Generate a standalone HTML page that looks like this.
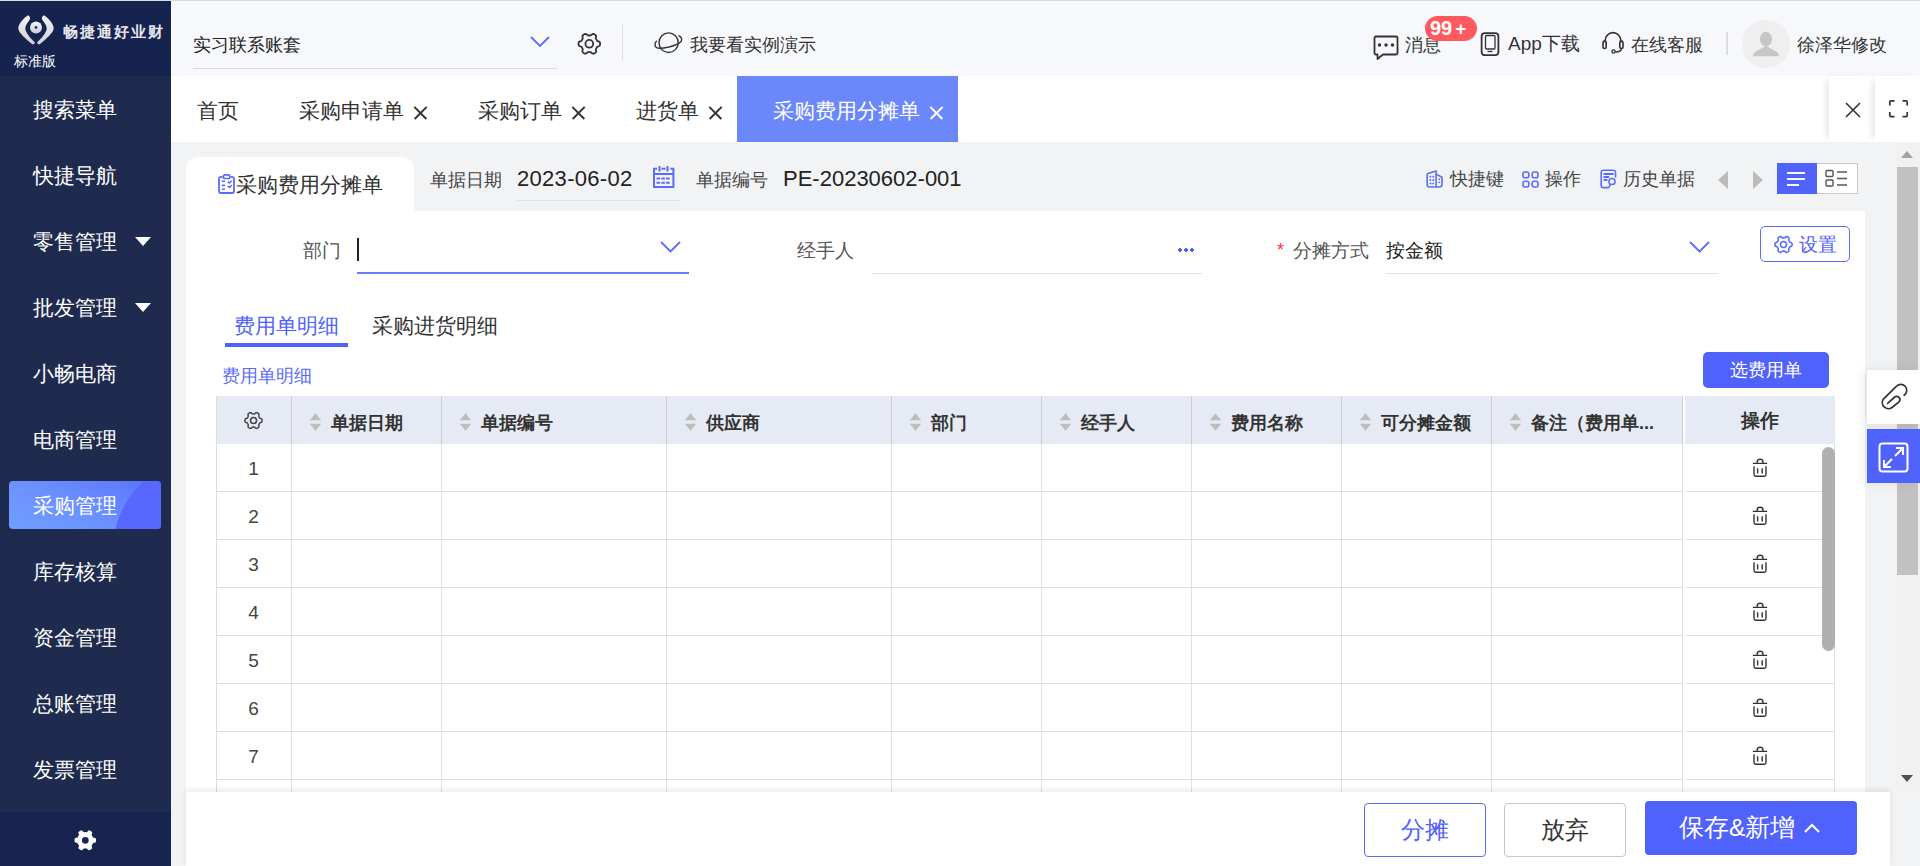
<!DOCTYPE html>
<html><head><meta charset="utf-8">
<style>
*{box-sizing:border-box;margin:0;padding:0}
html,body{width:1920px;height:866px;overflow:hidden;background:#f2f3f5;font-family:"Liberation Sans",sans-serif;color:#333}
.a{position:absolute}
.mi{position:absolute;left:33px;color:#fff;font-size:21px;line-height:24px;white-space:nowrap}
.tri{position:absolute;left:135px;width:0;height:0;border-left:8px solid transparent;border-right:8px solid transparent;border-top:9px solid #fff}
.t{position:absolute;font-size:18px;line-height:22px;white-space:nowrap;color:#333}
.tab{position:absolute;top:99px;font-size:21px;line-height:24px;white-space:nowrap;color:#333}
.x{display:inline-block;position:relative;width:14px;height:14px;margin-left:9px;vertical-align:0px}
.x:before,.x:after{content:"";position:absolute;left:-1.5px;top:8px;width:17px;height:1.5px;background:currentColor;transform:rotate(45deg)}
.x:after{transform:rotate(-45deg)}
</style></head><body>

<div class="a" style="left:0;top:0;width:1920px;height:1px;background:#dcdcdc"></div>
<div class="a" style="left:0;top:1px;width:171px;height:865px;background:#1f2b4e"></div>
<div class="a" style="left:0;top:1px;width:171px;height:75px;background:#16234f"></div>
<div class="a" style="left:0;top:812px;width:171px;height:54px;background:#17244f"></div>
<div class="a" style="left:9px;top:481px;width:152px;height:48px;border-radius:4px;background:linear-gradient(205deg,#5873ff 0%,#6c90ff 55%,#6f9fff 100%);overflow:hidden"><div class="a" style="left:104px;top:-23px;width:184px;height:184px;border-radius:50%;background:#5868ff"></div></div>
<div class="a" style="left:171px;top:1px;width:1749px;height:75px;background:#f7f8fc;border-left:1px solid #fff"></div>
<div class="a" style="left:171px;top:76px;width:1749px;height:66px;background:#fff;border-left:1px solid #fff"></div>
<svg class="a" style="left:17px;top:14px" width="40" height="32" viewBox="0 0 40 32">
<defs><linearGradient id="lg" x1="0" y1="0" x2="0" y2="1"><stop offset="0" stop-color="#f4f4f6"/><stop offset="1" stop-color="#cfd0d6"/></linearGradient></defs>
<path d="M10.5 1.5C8 3.5 1.3 9 1.3 14.5C1.3 18.5 9 25 15.3 30.3C16.8 30.6 18 29.6 17.8 28.2C13 23.5 8.3 18.5 8.3 14.2C8.3 11 11 8.5 12.8 5.5C13.8 3.5 12 0.8 10.5 1.5Z" fill="url(#lg)"/>
<path d="M27.5 1.5C30 3.5 36.7 9 36.7 14.5C36.7 18.5 29 25 22.7 30.3C21.2 30.6 20 29.6 20.2 28.2C25 23.5 29.7 18.5 29.7 14.2C29.7 11 27 8.5 25.2 5.5C24.2 3.5 26 0.8 27.5 1.5Z" fill="url(#lg)"/>
<circle cx="19" cy="13.5" r="6" fill="url(#lg)"/><circle cx="19" cy="13.5" r="1.4" fill="#2a3560"/>
</svg>
<div class="a" style="left:63px;top:23px;color:#e8e8ee;font-size:15px;line-height:18px;font-weight:bold;letter-spacing:2px;white-space:nowrap">畅捷通好业财</div>
<div class="a" style="left:14px;top:53px;color:#fff;font-size:14px;line-height:16px;white-space:nowrap">标准版</div>
<div class="mi" style="top:98px">搜索菜单</div>
<div class="mi" style="top:164px">快捷导航</div>
<div class="mi" style="top:230px">零售管理</div>
<div class="tri" style="top:237px"></div>
<div class="mi" style="top:296px">批发管理</div>
<div class="tri" style="top:303px"></div>
<div class="mi" style="top:362px">小畅电商</div>
<div class="mi" style="top:428px">电商管理</div>
<div class="mi" style="top:494px">采购管理</div>
<div class="mi" style="top:560px">库存核算</div>
<div class="mi" style="top:626px">资金管理</div>
<div class="mi" style="top:692px">总账管理</div>
<div class="mi" style="top:758px">发票管理</div>
<svg class="a" style="left:73px;top:828px" width="24" height="24" viewBox="0 0 24 24"><path fill="#fff" fill-rule="evenodd" d="M23.00 12.30 L22.99 12.77 L22.96 13.23 L22.89 13.69 L22.77 14.15 L22.41 14.54 L21.43 14.75 L20.45 14.87 L20.07 15.13 L19.89 15.44 L19.73 15.77 L19.57 16.09 L19.40 16.40 L19.22 16.71 L19.02 17.01 L18.82 17.30 L18.64 17.62 L18.60 18.08 L18.98 18.98 L19.29 19.93 L19.13 20.44 L18.80 20.78 L18.44 21.06 L18.05 21.32 L17.65 21.57 L17.24 21.79 L16.82 21.99 L16.39 22.17 L15.94 22.29 L15.41 22.17 L14.75 21.43 L14.15 20.65 L13.74 20.45 L13.37 20.45 L13.01 20.47 L12.66 20.49 L12.30 20.50 L11.94 20.49 L11.59 20.47 L11.23 20.45 L10.86 20.45 L10.45 20.65 L9.85 21.43 L9.19 22.17 L8.66 22.29 L8.21 22.17 L7.78 21.99 L7.36 21.79 L6.95 21.57 L6.55 21.32 L6.16 21.06 L5.80 20.78 L5.47 20.44 L5.31 19.93 L5.62 18.98 L6.00 18.08 L5.96 17.62 L5.78 17.30 L5.58 17.01 L5.38 16.71 L5.20 16.40 L5.03 16.09 L4.87 15.77 L4.71 15.44 L4.53 15.13 L4.15 14.87 L3.17 14.75 L2.19 14.54 L1.83 14.15 L1.71 13.69 L1.64 13.23 L1.61 12.77 L1.60 12.30 L1.61 11.83 L1.64 11.37 L1.71 10.91 L1.83 10.45 L2.19 10.06 L3.17 9.85 L4.15 9.73 L4.53 9.47 L4.71 9.16 L4.87 8.83 L5.03 8.51 L5.20 8.20 L5.38 7.89 L5.58 7.59 L5.78 7.30 L5.96 6.98 L6.00 6.52 L5.62 5.62 L5.31 4.67 L5.47 4.16 L5.80 3.82 L6.16 3.54 L6.55 3.28 L6.95 3.03 L7.36 2.81 L7.78 2.61 L8.21 2.43 L8.66 2.31 L9.19 2.43 L9.85 3.17 L10.45 3.95 L10.86 4.15 L11.23 4.15 L11.59 4.13 L11.94 4.11 L12.30 4.10 L12.66 4.11 L13.01 4.13 L13.37 4.15 L13.74 4.15 L14.15 3.95 L14.75 3.17 L15.41 2.43 L15.94 2.31 L16.39 2.43 L16.82 2.61 L17.24 2.81 L17.65 3.03 L18.05 3.28 L18.44 3.54 L18.80 3.82 L19.13 4.16 L19.29 4.67 L18.98 5.62 L18.60 6.52 L18.64 6.98 L18.82 7.30 L19.02 7.59 L19.22 7.89 L19.40 8.20 L19.57 8.51 L19.73 8.83 L19.89 9.16 L20.07 9.47 L20.45 9.73 L21.43 9.85 L22.41 10.06 L22.77 10.45 L22.89 10.91 L22.96 11.37 L22.99 11.83Z M15.7 12.3a3.4 3.4 0 1 0 -6.8 0a3.4 3.4 0 1 0 6.8 0Z"/></svg>
<div class="t" style="left:193px;top:34px;color:#222">实习联系账套</div>
<div class="a" style="left:193px;top:68px;width:364px;height:1px;background:#dcdcdc"></div>
<svg class="a" style="left:530px;top:36px" width="20" height="12" viewBox="0 0 20 12"><path d="M1 1l9 9 9-9" fill="none" stroke="#5b6cf9" stroke-width="1.8"/></svg>
<svg class="a" style="left:577px;top:32px" width="25" height="24" viewBox="0 0 25 24"><path fill="none" stroke="#333" stroke-width="1.8" stroke-linejoin="round" d="M23.10 11.80 L23.08 12.27 L23.03 12.74 L22.91 13.20 L22.68 13.63 L22.23 14.00 L21.52 14.27 L20.82 14.49 L20.35 14.73 L20.06 15.01 L19.85 15.32 L19.67 15.64 L19.49 15.95 L19.31 16.26 L19.13 16.58 L18.96 16.91 L18.86 17.30 L18.89 17.84 L19.05 18.55 L19.17 19.30 L19.07 19.87 L18.81 20.29 L18.48 20.62 L18.10 20.90 L17.70 21.15 L17.28 21.37 L16.85 21.56 L16.40 21.69 L15.90 21.70 L15.36 21.50 L14.77 21.02 L14.23 20.52 L13.79 20.23 L13.40 20.13 L13.03 20.10 L12.66 20.10 L12.30 20.10 L11.94 20.10 L11.57 20.10 L11.20 20.13 L10.81 20.23 L10.37 20.52 L9.83 21.02 L9.24 21.50 L8.70 21.70 L8.20 21.69 L7.75 21.56 L7.32 21.37 L6.90 21.15 L6.50 20.90 L6.12 20.62 L5.79 20.29 L5.53 19.87 L5.43 19.30 L5.55 18.55 L5.71 17.84 L5.74 17.30 L5.64 16.91 L5.47 16.58 L5.29 16.26 L5.11 15.95 L4.93 15.64 L4.75 15.32 L4.54 15.01 L4.25 14.73 L3.78 14.49 L3.08 14.27 L2.37 14.00 L1.92 13.63 L1.69 13.20 L1.57 12.74 L1.52 12.27 L1.50 11.80 L1.52 11.33 L1.57 10.86 L1.69 10.40 L1.92 9.97 L2.37 9.60 L3.08 9.33 L3.78 9.11 L4.25 8.87 L4.54 8.59 L4.75 8.28 L4.93 7.96 L5.11 7.65 L5.29 7.34 L5.47 7.02 L5.64 6.69 L5.74 6.30 L5.71 5.76 L5.55 5.05 L5.43 4.30 L5.53 3.73 L5.79 3.31 L6.12 2.98 L6.50 2.70 L6.90 2.45 L7.32 2.23 L7.75 2.04 L8.20 1.91 L8.70 1.90 L9.24 2.10 L9.83 2.58 L10.37 3.08 L10.81 3.37 L11.20 3.47 L11.57 3.50 L11.94 3.50 L12.30 3.50 L12.66 3.50 L13.03 3.50 L13.40 3.47 L13.79 3.37 L14.23 3.08 L14.77 2.58 L15.36 2.10 L15.90 1.90 L16.40 1.91 L16.85 2.04 L17.28 2.23 L17.70 2.45 L18.10 2.70 L18.48 2.98 L18.81 3.31 L19.07 3.73 L19.17 4.30 L19.05 5.05 L18.89 5.76 L18.86 6.30 L18.96 6.69 L19.13 7.02 L19.31 7.34 L19.49 7.65 L19.67 7.96 L19.85 8.28 L20.06 8.59 L20.35 8.87 L20.82 9.11 L21.52 9.33 L22.23 9.60 L22.68 9.97 L22.91 10.40 L23.03 10.86 L23.08 11.33Z"/><circle cx="12.3" cy="11.8" r="3.9" fill="none" stroke="#333" stroke-width="1.8"/></svg>
<div class="a" style="left:622px;top:24px;width:1px;height:36px;background:#ddd"></div>
<svg class="a" style="left:645px;top:25px" width="50" height="40" viewBox="0 0 50 40"><ellipse cx="23.6" cy="17.7" rx="9.6" ry="9.8" fill="none" stroke="#333" stroke-width="1.4"/><path d="M11.8 15.8C9.5 18 9.5 21 11.5 22.5C13 23.8 17 23.5 24 22C30 20.5 34 19 36 16.5C37.5 14.5 36.5 11.5 33.5 10.8" fill="none" stroke="#333" stroke-width="1.4"/></svg>
<div class="t" style="left:690px;top:34px;color:#333">我要看实例演示</div>
<svg class="a" style="left:1373px;top:35px" width="26" height="26" viewBox="0 0 26 26"><path d="M4.5 19.5H3a1.5 1.5 0 0 1-1.5-1.5V3A1.5 1.5 0 0 1 3 1.5h20A1.5 1.5 0 0 1 24.5 3v15a1.5 1.5 0 0 1-1.5 1.5H10L4.5 24z" fill="none" stroke="#333" stroke-width="1.8" stroke-linejoin="round"/><circle cx="6.5" cy="10" r="1.7" fill="#333"/><circle cx="13" cy="10" r="1.7" fill="#333"/><circle cx="19.5" cy="10" r="1.7" fill="#333"/></svg>
<div class="t" style="left:1405px;top:34px">消息</div>
<div class="a" style="left:1425px;top:16px;width:52px;height:25px;border-radius:13px;background:#ff5a5f;color:#fff;font-size:20px;line-height:25px;font-weight:bold;white-space:nowrap;padding-left:5px">99<span style="font-size:19px;margin-left:3px">+</span></div>
<svg class="a" style="left:1480px;top:32px" width="20" height="25" viewBox="0 0 20 25"><rect x="1.6" y="1.2" width="16.8" height="22" rx="3.2" fill="none" stroke="#333" stroke-width="1.8"/><rect x="5.5" y="3.5" width="9.5" height="13.5" rx="1" fill="none" stroke="#333" stroke-width="1.3"/><path d="M7.5 19.5h5" stroke="#333" stroke-width="1.3"/></svg>
<div class="t" style="left:1508px;top:33px;font-size:19px">App下载</div>
<svg class="a" style="left:1602px;top:31px" width="22" height="23" viewBox="0 0 22 23"><path d="M3.2 11.5V9.5a7.8 7.8 0 0 1 15.6 0v2" fill="none" stroke="#333" stroke-width="1.7"/><rect x="1" y="10" width="3.2" height="7.5" rx="1.6" fill="none" stroke="#333" stroke-width="1.6"/><rect x="17.8" y="10" width="3.2" height="7.5" rx="1.6" fill="none" stroke="#333" stroke-width="1.6"/><path d="M19.4 17.5c0 2.5-2.5 3.5-6 3.5" fill="none" stroke="#333" stroke-width="1.5"/><circle cx="11.5" cy="20.5" r="1.6" fill="none" stroke="#333" stroke-width="1.4"/></svg>
<div class="t" style="left:1631px;top:34px">在线客服</div>
<div class="a" style="left:1726px;top:32px;width:2px;height:23px;background:#ddd"></div>
<div class="a" style="left:1742px;top:20px;width:48px;height:48px;border-radius:50%;background:#efefef;overflow:hidden"><svg width="48" height="48" viewBox="0 0 48 48"><ellipse cx="24" cy="19" rx="6" ry="7.3" fill="#c6c6c6"/><path d="M11.3 36.2C11.3 33 12.5 32 17.5 29.5L24 25.8L30.5 29.5C35.5 32 36.7 33 36.7 36.2Z" fill="#c6c6c6"/></svg></div>
<div class="t" style="left:1797px;top:34px">徐泽华修改</div>
<div class="tab" style="left:197px">首页</div>
<div class="tab" style="left:299px">采购申请单<i class="x"></i></div>
<div class="tab" style="left:478px">采购订单<i class="x"></i></div>
<div class="tab" style="left:636px">进货单<i class="x"></i></div>
<div class="a" style="left:737px;top:76px;width:221px;height:66px;background:#6b88fb"></div>
<div class="tab" style="left:773px;color:#fff">采购费用分摊单<i class="x"></i></div>
<div class="a" style="left:1829px;top:76px;width:46px;height:66px;background:#fff;box-shadow:-6px 0 8px -4px rgba(0,0,0,.12)"></div>
<div class="a" style="left:1875px;top:76px;width:45px;height:66px;background:#fff;box-shadow:-6px 0 8px -4px rgba(0,0,0,.12)"></div>
<svg class="a" style="left:1845px;top:102px" width="16" height="16" viewBox="0 0 16 16"><path d="M1 1l14 14M15 1L1 15" stroke="#333" stroke-width="1.6"/></svg>
<svg class="a" style="left:1888px;top:99px" width="21" height="20" viewBox="0 0 21 20"><path d="M1.8 6.5V3a1.2 1.2 0 0 1 1.2-1.2h3.5M14.5 1.8H18a1.2 1.2 0 0 1 1.2 1.2v3.5M19.2 13v3.5a1.2 1.2 0 0 1-1.2 1.2h-3.5M6.5 17.7H3a1.2 1.2 0 0 1-1.2-1.2V13" fill="none" stroke="#333" stroke-width="1.7"/></svg>
<div class="a" style="left:186px;top:157px;width:228px;height:60px;background:#fff;border-radius:12px 12px 0 0"></div>
<div class="a" style="left:186px;top:211px;width:1679px;height:655px;background:#fff"></div>
<svg class="a" style="left:218px;top:174px" width="17" height="20" viewBox="0 0 17 20"><path d="M4.5 2.8H3a2 2 0 0 0-2 2V17a2 2 0 0 0 2 2h11a2 2 0 0 0 2-2V4.8a2 2 0 0 0-2-2h-1.5" fill="none" stroke="#5b6cf9" stroke-width="1.8"/><rect x="5.3" y="0.9" width="6.6" height="3.6" rx="1.8" fill="none" stroke="#5b6cf9" stroke-width="1.6"/><path d="M3.8 7.3h3.2M3.8 11.4h3.2M3.8 15.3h3.2M9.6 7.6l1.7 1.4 2.4-2.2M9.6 12l1.7 1.4 2.4-2.2" fill="none" stroke="#5b6cf9" stroke-width="1.6"/></svg>
<div class="t" style="left:236px;top:173px;font-size:21px;line-height:24px;color:#333">采购费用分摊单</div>
<div class="t" style="left:430px;top:169px;color:#444">单据日期</div>
<div class="t" style="left:517px;top:166px;font-size:22px;line-height:26px;letter-spacing:0.3px;color:#222">2023-06-02</div>
<div class="a" style="left:517px;top:200px;width:163px;height:1px;background:#e0e0e0"></div>
<svg class="a" style="left:653px;top:166px" width="22" height="22" viewBox="0 0 22 22"><path d="M4 2.8H1v18.2h19.4V2.8h-3M8.5 2.8h4M1 8h19.4" fill="none" stroke="#5b6cf9" stroke-width="2"/><path d="M6.5 0v5.5M14.5 0v5.5" stroke="#5b6cf9" stroke-width="2"/><path d="M3.5 12.5h14M3.5 16.8h14" stroke="#5b6cf9" stroke-width="1.9" stroke-dasharray="3.6 1.2"/></svg>
<div class="t" style="left:696px;top:169px;color:#444">单据编号</div>
<div class="t" style="left:783px;top:166px;font-size:22px;line-height:26px;letter-spacing:0px;color:#222">PE-20230602-001</div>
<svg class="a" style="left:1420px;top:165px" width="30" height="30" viewBox="0 0 30 30"><path d="M7.2 8.8V19.5A2.5 2.5 0 0 0 9.7 22H19.5A2.5 2.5 0 0 0 22 19.5V12.2L16.6 9.4M7.2 8.8L16.1 5.9V22" fill="none" stroke="#5b6cf9" stroke-width="1.6" stroke-linejoin="round"/><g fill="#5b6cf9"><circle cx="10.3" cy="11.8" r="1"/><circle cx="13.3" cy="11.8" r="1"/><circle cx="10.3" cy="15" r="1"/><circle cx="13.3" cy="15" r="1"/><circle cx="19.3" cy="14.2" r="0.9"/><circle cx="19.3" cy="17.3" r="0.9"/></g><path d="M9.5 18.5h4.5" stroke="#5b6cf9" stroke-width="1.3" stroke-dasharray="2 0.8"/></svg>
<div class="t" style="left:1450px;top:168px;color:#444">快捷键</div>
<svg class="a" style="left:1522px;top:171px" width="17" height="17" viewBox="0 0 17 17"><rect x="1" y="1" width="5.8" height="5.8" rx="2" fill="none" stroke="#5b6cf9" stroke-width="1.6"/><rect x="10.2" y="1" width="5.8" height="5.8" rx="2" fill="none" stroke="#5b6cf9" stroke-width="1.6"/><rect x="1" y="10.2" width="5.8" height="5.8" rx="2" fill="none" stroke="#5b6cf9" stroke-width="1.6"/><rect x="10.2" y="10.2" width="5.8" height="5.8" rx="2" fill="none" stroke="#5b6cf9" stroke-width="1.6"/></svg>
<div class="t" style="left:1545px;top:168px;color:#444">操作</div>
<svg class="a" style="left:1595px;top:165px" width="30" height="30" viewBox="0 0 30 30"><path d="M20.5 12.5V7A2 2 0 0 0 18.5 5.2H8A2 2 0 0 0 6.2 7V20.8A2 2 0 0 0 8 22.6H14.3" fill="none" stroke="#5b6cf9" stroke-width="1.6"/><path d="M9.2 9h8.8M9.2 12h4.3M9.2 15h2.5" stroke="#5b6cf9" stroke-width="1.8" stroke-linecap="round"/><circle cx="17" cy="16.5" r="3.1" fill="none" stroke="#5b6cf9" stroke-width="1.5"/><path d="M15.4 19.3L14.1 22.3" stroke="#5b6cf9" stroke-width="1.6"/></svg>
<div class="t" style="left:1623px;top:168px;color:#444">历史单据</div>
<div class="a" style="left:1718px;top:171px;width:0;height:0;border-top:9px solid transparent;border-bottom:9px solid transparent;border-right:10px solid #bbb"></div>
<div class="a" style="left:1753px;top:171px;width:0;height:0;border-top:9px solid transparent;border-bottom:9px solid transparent;border-left:10px solid #bbb"></div>
<div class="a" style="left:1777px;top:163px;width:81px;height:31px;border:1px solid #c8c8c8;background:#fff"></div>
<div class="a" style="left:1777px;top:163px;width:40px;height:31px;background:#5062fc"></div>
<svg class="a" style="left:1786px;top:171px" width="22" height="16" viewBox="0 0 22 16"><path d="M1 2h18M1 8h18M1 14h12" stroke="#fff" stroke-width="1.8"/></svg>
<svg class="a" style="left:1825px;top:169px" width="24" height="19" viewBox="0 0 24 19"><rect x="1" y="1.5" width="7" height="6" rx="1" fill="none" stroke="#555" stroke-width="1.4"/><rect x="1" y="11" width="7" height="6" rx="1" fill="none" stroke="#555" stroke-width="1.4"/><path d="M12 3h10M12 9.5h10M12 16h10" stroke="#555" stroke-width="1.4"/></svg>
<div class="t" style="left:303px;top:240px;font-size:19px;color:#555">部门</div>
<div class="a" style="left:357px;top:238px;width:2px;height:23px;background:#222"></div>
<svg class="a" style="left:660px;top:241px" width="21" height="12" viewBox="0 0 21 12"><path d="M1 1l9.5 9.5L20 1" fill="none" stroke="#5b6cf9" stroke-width="1.8"/></svg>
<div class="a" style="left:357px;top:272px;width:332px;height:2px;background:#6b7cf9"></div>
<div class="t" style="left:797px;top:240px;font-size:19px;color:#555">经手人</div>
<div class="a" style="left:1177px;top:248px;width:17px;height:4px;background:radial-gradient(circle,#5062fc 1.6px,transparent 2px) 0 0/6px 4px"></div>
<div class="a" style="left:872px;top:273px;width:330px;height:1px;background:#e0e0e0"></div>
<div class="t" style="left:1277px;top:239px;color:#f33">*</div>
<div class="t" style="left:1293px;top:240px;font-size:19px;color:#555">分摊方式</div>
<div class="t" style="left:1386px;top:240px;font-size:18.5px;color:#222">按金额</div>
<svg class="a" style="left:1689px;top:241px" width="21" height="12" viewBox="0 0 21 12"><path d="M1 1l9.5 9.5L20 1" fill="none" stroke="#5b6cf9" stroke-width="1.8"/></svg>
<div class="a" style="left:1386px;top:273px;width:332px;height:1px;background:#e0e0e0"></div>
<div class="a" style="left:1760px;top:226px;width:90px;height:36px;border:1px solid #5b6cf9;border-radius:5px"></div>
<svg class="a" style="left:1774px;top:235px" width="19" height="19" viewBox="0 0 19 19"><path fill="none" stroke="#5b6cf9" stroke-width="1.6" stroke-linejoin="round" d="M18.10 9.50 L18.09 9.87 L18.04 10.25 L17.95 10.61 L17.76 10.96 L17.40 11.25 L16.84 11.47 L16.28 11.64 L15.90 11.83 L15.67 12.06 L15.50 12.30 L15.36 12.55 L15.22 12.80 L15.07 13.05 L14.93 13.30 L14.80 13.57 L14.72 13.88 L14.74 14.30 L14.87 14.87 L14.97 15.47 L14.89 15.93 L14.69 16.26 L14.42 16.52 L14.12 16.75 L13.80 16.95 L13.47 17.12 L13.12 17.27 L12.76 17.37 L12.37 17.38 L11.93 17.22 L11.47 16.84 L11.04 16.44 L10.68 16.21 L10.37 16.12 L10.08 16.10 L9.79 16.10 L9.50 16.10 L9.21 16.10 L8.92 16.10 L8.63 16.12 L8.32 16.21 L7.96 16.44 L7.53 16.84 L7.07 17.22 L6.63 17.38 L6.24 17.37 L5.88 17.27 L5.53 17.12 L5.20 16.95 L4.88 16.75 L4.58 16.52 L4.31 16.26 L4.11 15.93 L4.03 15.47 L4.13 14.87 L4.26 14.30 L4.28 13.88 L4.20 13.57 L4.07 13.30 L3.93 13.05 L3.78 12.80 L3.64 12.55 L3.50 12.30 L3.33 12.06 L3.10 11.83 L2.72 11.64 L2.16 11.47 L1.60 11.25 L1.24 10.96 L1.05 10.61 L0.96 10.25 L0.91 9.87 L0.90 9.50 L0.91 9.13 L0.96 8.75 L1.05 8.39 L1.24 8.04 L1.60 7.75 L2.16 7.53 L2.72 7.36 L3.10 7.17 L3.33 6.94 L3.50 6.70 L3.64 6.45 L3.78 6.20 L3.93 5.95 L4.07 5.70 L4.20 5.43 L4.28 5.12 L4.26 4.70 L4.13 4.13 L4.03 3.53 L4.11 3.07 L4.31 2.74 L4.58 2.48 L4.88 2.25 L5.20 2.05 L5.53 1.88 L5.88 1.73 L6.24 1.63 L6.63 1.62 L7.07 1.78 L7.53 2.16 L7.96 2.56 L8.32 2.79 L8.63 2.88 L8.92 2.90 L9.21 2.90 L9.50 2.90 L9.79 2.90 L10.08 2.90 L10.37 2.88 L10.68 2.79 L11.04 2.56 L11.47 2.16 L11.93 1.78 L12.37 1.62 L12.76 1.63 L13.12 1.73 L13.47 1.88 L13.80 2.05 L14.12 2.25 L14.42 2.48 L14.69 2.74 L14.89 3.07 L14.97 3.53 L14.87 4.13 L14.74 4.70 L14.72 5.12 L14.80 5.43 L14.93 5.70 L15.07 5.95 L15.22 6.20 L15.36 6.45 L15.50 6.70 L15.67 6.94 L15.90 7.17 L16.28 7.36 L16.84 7.53 L17.40 7.75 L17.76 8.04 L17.95 8.39 L18.04 8.75 L18.09 9.13Z"/><circle cx="9.5" cy="9.5" r="3" fill="none" stroke="#5b6cf9" stroke-width="1.6"/></svg>
<div class="t" style="left:1799px;top:234px;font-size:19px;color:#5062fc">设置</div>
<div class="t" style="left:234px;top:314px;font-size:21px;line-height:24px;color:#5062fc">费用单明细</div>
<div class="a" style="left:225px;top:343px;width:123px;height:4px;background:#5062fc"></div>
<div class="t" style="left:372px;top:314px;font-size:21px;line-height:24px;color:#333">采购进货明细</div>
<div class="t" style="left:222px;top:365px;font-size:18px;line-height:22px;color:#5b6cf9">费用单明细</div>
<div class="a" style="left:1703px;top:352px;width:126px;height:36px;background:#5062fc;border-radius:5px;color:#fff;font-size:18px;line-height:36px;text-align:center">选费用单</div>
<div class="a" style="left:216px;top:396px;width:1619px;height:48px;background:#e6eaf4"></div>
<div class="a" style="left:216px;top:396px;width:1px;height:396px;background:#ddd"></div>
<div class="a" style="left:291px;top:396px;width:1px;height:48px;background:#ccc"></div>
<div class="a" style="left:291px;top:444px;width:1px;height:348px;background:#e0e0e0"></div>
<div class="a" style="left:441px;top:396px;width:1px;height:48px;background:#ccc"></div>
<div class="a" style="left:441px;top:444px;width:1px;height:348px;background:#e0e0e0"></div>
<div class="a" style="left:666px;top:396px;width:1px;height:48px;background:#ccc"></div>
<div class="a" style="left:666px;top:444px;width:1px;height:348px;background:#e0e0e0"></div>
<div class="a" style="left:891px;top:396px;width:1px;height:48px;background:#ccc"></div>
<div class="a" style="left:891px;top:444px;width:1px;height:348px;background:#e0e0e0"></div>
<div class="a" style="left:1041px;top:396px;width:1px;height:48px;background:#ccc"></div>
<div class="a" style="left:1041px;top:444px;width:1px;height:348px;background:#e0e0e0"></div>
<div class="a" style="left:1191px;top:396px;width:1px;height:48px;background:#ccc"></div>
<div class="a" style="left:1191px;top:444px;width:1px;height:348px;background:#e0e0e0"></div>
<div class="a" style="left:1341px;top:396px;width:1px;height:48px;background:#ccc"></div>
<div class="a" style="left:1341px;top:444px;width:1px;height:348px;background:#e0e0e0"></div>
<div class="a" style="left:1491px;top:396px;width:1px;height:48px;background:#ccc"></div>
<div class="a" style="left:1491px;top:444px;width:1px;height:348px;background:#e0e0e0"></div>
<div class="a" style="left:1682px;top:396px;width:1px;height:48px;background:#ccc"></div>
<div class="a" style="left:1682px;top:444px;width:1px;height:348px;background:#e0e0e0"></div>
<div class="a" style="left:1683px;top:396px;width:2px;height:396px;background:#fff"></div>
<div class="a" style="left:217px;top:491px;width:1466px;height:1px;background:#e0e0e0"></div>
<div class="a" style="left:1685px;top:491px;width:150px;height:1px;background:#e0e0e0"></div>
<div class="t" style="left:216px;top:457px;width:75px;text-align:center;font-size:19px;line-height:24px;color:#444">1</div>
<svg class="a" style="left:1745px;top:452px" width="30" height="30" viewBox="0 0 30 30"><path d="M7.8 11.4H22.2M12.1 11.4V10.25A2.95 2.95 0 0 1 18 10.25V11.4M9 14.2V22.5A1.7 1.7 0 0 0 10.7 24.2H19.3A1.7 1.7 0 0 0 21 22.5V14.2M12.6 16.3V21.5M17.2 16.3V21.5" fill="none" stroke="#333" stroke-width="1.4"/></svg>
<div class="a" style="left:217px;top:539px;width:1466px;height:1px;background:#e0e0e0"></div>
<div class="a" style="left:1685px;top:539px;width:150px;height:1px;background:#e0e0e0"></div>
<div class="t" style="left:216px;top:505px;width:75px;text-align:center;font-size:19px;line-height:24px;color:#444">2</div>
<svg class="a" style="left:1745px;top:500px" width="30" height="30" viewBox="0 0 30 30"><path d="M7.8 11.4H22.2M12.1 11.4V10.25A2.95 2.95 0 0 1 18 10.25V11.4M9 14.2V22.5A1.7 1.7 0 0 0 10.7 24.2H19.3A1.7 1.7 0 0 0 21 22.5V14.2M12.6 16.3V21.5M17.2 16.3V21.5" fill="none" stroke="#333" stroke-width="1.4"/></svg>
<div class="a" style="left:217px;top:587px;width:1466px;height:1px;background:#e0e0e0"></div>
<div class="a" style="left:1685px;top:587px;width:150px;height:1px;background:#e0e0e0"></div>
<div class="t" style="left:216px;top:553px;width:75px;text-align:center;font-size:19px;line-height:24px;color:#444">3</div>
<svg class="a" style="left:1745px;top:548px" width="30" height="30" viewBox="0 0 30 30"><path d="M7.8 11.4H22.2M12.1 11.4V10.25A2.95 2.95 0 0 1 18 10.25V11.4M9 14.2V22.5A1.7 1.7 0 0 0 10.7 24.2H19.3A1.7 1.7 0 0 0 21 22.5V14.2M12.6 16.3V21.5M17.2 16.3V21.5" fill="none" stroke="#333" stroke-width="1.4"/></svg>
<div class="a" style="left:217px;top:635px;width:1466px;height:1px;background:#e0e0e0"></div>
<div class="a" style="left:1685px;top:635px;width:150px;height:1px;background:#e0e0e0"></div>
<div class="t" style="left:216px;top:601px;width:75px;text-align:center;font-size:19px;line-height:24px;color:#444">4</div>
<svg class="a" style="left:1745px;top:596px" width="30" height="30" viewBox="0 0 30 30"><path d="M7.8 11.4H22.2M12.1 11.4V10.25A2.95 2.95 0 0 1 18 10.25V11.4M9 14.2V22.5A1.7 1.7 0 0 0 10.7 24.2H19.3A1.7 1.7 0 0 0 21 22.5V14.2M12.6 16.3V21.5M17.2 16.3V21.5" fill="none" stroke="#333" stroke-width="1.4"/></svg>
<div class="a" style="left:217px;top:683px;width:1466px;height:1px;background:#e0e0e0"></div>
<div class="a" style="left:1685px;top:683px;width:150px;height:1px;background:#e0e0e0"></div>
<div class="t" style="left:216px;top:649px;width:75px;text-align:center;font-size:19px;line-height:24px;color:#444">5</div>
<svg class="a" style="left:1745px;top:644px" width="30" height="30" viewBox="0 0 30 30"><path d="M7.8 11.4H22.2M12.1 11.4V10.25A2.95 2.95 0 0 1 18 10.25V11.4M9 14.2V22.5A1.7 1.7 0 0 0 10.7 24.2H19.3A1.7 1.7 0 0 0 21 22.5V14.2M12.6 16.3V21.5M17.2 16.3V21.5" fill="none" stroke="#333" stroke-width="1.4"/></svg>
<div class="a" style="left:217px;top:731px;width:1466px;height:1px;background:#e0e0e0"></div>
<div class="a" style="left:1685px;top:731px;width:150px;height:1px;background:#e0e0e0"></div>
<div class="t" style="left:216px;top:697px;width:75px;text-align:center;font-size:19px;line-height:24px;color:#444">6</div>
<svg class="a" style="left:1745px;top:692px" width="30" height="30" viewBox="0 0 30 30"><path d="M7.8 11.4H22.2M12.1 11.4V10.25A2.95 2.95 0 0 1 18 10.25V11.4M9 14.2V22.5A1.7 1.7 0 0 0 10.7 24.2H19.3A1.7 1.7 0 0 0 21 22.5V14.2M12.6 16.3V21.5M17.2 16.3V21.5" fill="none" stroke="#333" stroke-width="1.4"/></svg>
<div class="a" style="left:217px;top:779px;width:1466px;height:1px;background:#e0e0e0"></div>
<div class="a" style="left:1685px;top:779px;width:150px;height:1px;background:#e0e0e0"></div>
<div class="t" style="left:216px;top:745px;width:75px;text-align:center;font-size:19px;line-height:24px;color:#444">7</div>
<svg class="a" style="left:1745px;top:740px" width="30" height="30" viewBox="0 0 30 30"><path d="M7.8 11.4H22.2M12.1 11.4V10.25A2.95 2.95 0 0 1 18 10.25V11.4M9 14.2V22.5A1.7 1.7 0 0 0 10.7 24.2H19.3A1.7 1.7 0 0 0 21 22.5V14.2M12.6 16.3V21.5M17.2 16.3V21.5" fill="none" stroke="#333" stroke-width="1.4"/></svg>
<svg class="a" style="left:244px;top:411px" width="19" height="19" viewBox="0 0 19 19"><path fill="none" stroke="#444" stroke-width="1.5" stroke-linejoin="round" d="M18.10 9.50 L18.09 9.87 L18.04 10.25 L17.95 10.61 L17.76 10.96 L17.40 11.25 L16.84 11.47 L16.28 11.64 L15.90 11.83 L15.67 12.06 L15.50 12.30 L15.36 12.55 L15.22 12.80 L15.07 13.05 L14.93 13.30 L14.80 13.57 L14.72 13.88 L14.74 14.30 L14.87 14.87 L14.97 15.47 L14.89 15.93 L14.69 16.26 L14.42 16.52 L14.12 16.75 L13.80 16.95 L13.47 17.12 L13.12 17.27 L12.76 17.37 L12.37 17.38 L11.93 17.22 L11.47 16.84 L11.04 16.44 L10.68 16.21 L10.37 16.12 L10.08 16.10 L9.79 16.10 L9.50 16.10 L9.21 16.10 L8.92 16.10 L8.63 16.12 L8.32 16.21 L7.96 16.44 L7.53 16.84 L7.07 17.22 L6.63 17.38 L6.24 17.37 L5.88 17.27 L5.53 17.12 L5.20 16.95 L4.88 16.75 L4.58 16.52 L4.31 16.26 L4.11 15.93 L4.03 15.47 L4.13 14.87 L4.26 14.30 L4.28 13.88 L4.20 13.57 L4.07 13.30 L3.93 13.05 L3.78 12.80 L3.64 12.55 L3.50 12.30 L3.33 12.06 L3.10 11.83 L2.72 11.64 L2.16 11.47 L1.60 11.25 L1.24 10.96 L1.05 10.61 L0.96 10.25 L0.91 9.87 L0.90 9.50 L0.91 9.13 L0.96 8.75 L1.05 8.39 L1.24 8.04 L1.60 7.75 L2.16 7.53 L2.72 7.36 L3.10 7.17 L3.33 6.94 L3.50 6.70 L3.64 6.45 L3.78 6.20 L3.93 5.95 L4.07 5.70 L4.20 5.43 L4.28 5.12 L4.26 4.70 L4.13 4.13 L4.03 3.53 L4.11 3.07 L4.31 2.74 L4.58 2.48 L4.88 2.25 L5.20 2.05 L5.53 1.88 L5.88 1.73 L6.24 1.63 L6.63 1.62 L7.07 1.78 L7.53 2.16 L7.96 2.56 L8.32 2.79 L8.63 2.88 L8.92 2.90 L9.21 2.90 L9.50 2.90 L9.79 2.90 L10.08 2.90 L10.37 2.88 L10.68 2.79 L11.04 2.56 L11.47 2.16 L11.93 1.78 L12.37 1.62 L12.76 1.63 L13.12 1.73 L13.47 1.88 L13.80 2.05 L14.12 2.25 L14.42 2.48 L14.69 2.74 L14.89 3.07 L14.97 3.53 L14.87 4.13 L14.74 4.70 L14.72 5.12 L14.80 5.43 L14.93 5.70 L15.07 5.95 L15.22 6.20 L15.36 6.45 L15.50 6.70 L15.67 6.94 L15.90 7.17 L16.28 7.36 L16.84 7.53 L17.40 7.75 L17.76 8.04 L17.95 8.39 L18.04 8.75 L18.09 9.13Z"/><circle cx="9.5" cy="9.5" r="3" fill="none" stroke="#444" stroke-width="1.5"/></svg>
<svg class="a" style="left:309px;top:413px" width="13" height="18" viewBox="0 0 13 18"><path d="M0.8 7.3L6.5 0.3l5.7 7z M0.8 10.7l5.7 7 5.7-7z" fill="#bdbdbd"/></svg>
<div class="t" style="left:331px;top:412px;font-size:18px;font-weight:bold;color:#333">单据日期</div>
<svg class="a" style="left:459px;top:413px" width="13" height="18" viewBox="0 0 13 18"><path d="M0.8 7.3L6.5 0.3l5.7 7z M0.8 10.7l5.7 7 5.7-7z" fill="#bdbdbd"/></svg>
<div class="t" style="left:481px;top:412px;font-size:18px;font-weight:bold;color:#333">单据编号</div>
<svg class="a" style="left:684px;top:413px" width="13" height="18" viewBox="0 0 13 18"><path d="M0.8 7.3L6.5 0.3l5.7 7z M0.8 10.7l5.7 7 5.7-7z" fill="#bdbdbd"/></svg>
<div class="t" style="left:706px;top:412px;font-size:18px;font-weight:bold;color:#333">供应商</div>
<svg class="a" style="left:909px;top:413px" width="13" height="18" viewBox="0 0 13 18"><path d="M0.8 7.3L6.5 0.3l5.7 7z M0.8 10.7l5.7 7 5.7-7z" fill="#bdbdbd"/></svg>
<div class="t" style="left:931px;top:412px;font-size:18px;font-weight:bold;color:#333">部门</div>
<svg class="a" style="left:1059px;top:413px" width="13" height="18" viewBox="0 0 13 18"><path d="M0.8 7.3L6.5 0.3l5.7 7z M0.8 10.7l5.7 7 5.7-7z" fill="#bdbdbd"/></svg>
<div class="t" style="left:1081px;top:412px;font-size:18px;font-weight:bold;color:#333">经手人</div>
<svg class="a" style="left:1209px;top:413px" width="13" height="18" viewBox="0 0 13 18"><path d="M0.8 7.3L6.5 0.3l5.7 7z M0.8 10.7l5.7 7 5.7-7z" fill="#bdbdbd"/></svg>
<div class="t" style="left:1231px;top:412px;font-size:18px;font-weight:bold;color:#333">费用名称</div>
<svg class="a" style="left:1359px;top:413px" width="13" height="18" viewBox="0 0 13 18"><path d="M0.8 7.3L6.5 0.3l5.7 7z M0.8 10.7l5.7 7 5.7-7z" fill="#bdbdbd"/></svg>
<div class="t" style="left:1381px;top:412px;font-size:18px;font-weight:bold;color:#333">可分摊金额</div>
<svg class="a" style="left:1509px;top:413px" width="13" height="18" viewBox="0 0 13 18"><path d="M0.8 7.3L6.5 0.3l5.7 7z M0.8 10.7l5.7 7 5.7-7z" fill="#bdbdbd"/></svg>
<div class="t" style="left:1531px;top:412px;font-size:18px;font-weight:bold;color:#333">备注（费用单...</div>
<div class="t" style="left:1685px;top:410px;width:150px;text-align:center;font-size:19px;font-weight:bold;color:#333">操作</div>
<div class="a" style="left:1834px;top:444px;width:1px;height:348px;background:#e0e0e0"></div>
<div class="a" style="left:1822px;top:447px;width:13px;height:204px;background:#b0b0b0;border-radius:7px"></div>
<div class="a" style="left:1895px;top:142px;width:25px;height:650px;background:#f1f1f1"></div>
<div class="a" style="left:1897px;top:167px;width:21px;height:408px;background:#c1c1c1"></div>
<div class="a" style="left:1901px;top:151px;width:0;height:0;border-left:6px solid transparent;border-right:6px solid transparent;border-bottom:7px solid #a3a3a3"></div>
<div class="a" style="left:1901px;top:775px;width:0;height:0;border-left:6px solid transparent;border-right:6px solid transparent;border-top:7px solid #505050"></div>
<div class="a" style="left:1867px;top:370px;width:53px;height:54px;background:#fff;box-shadow:-4px 0 10px rgba(0,0,0,.08)"></div>
<svg class="a" style="left:1872px;top:375px" width="44" height="45" viewBox="0 0 44 45"><path d="M32.2 20.3A6 6 0 1 0 24.06 11.66L11.4 24.1A6.1 6.1 0 0 0 20 32.5L27.3 26.6A3.3 3.3 0 0 0 22.7 22L15.6 28.4" fill="none" stroke="#333" stroke-width="1.7" stroke-linecap="round"/></svg>
<div class="a" style="left:1867px;top:429px;width:53px;height:54px;background:#5062fc;box-shadow:-4px 0 10px rgba(0,0,0,.08)"></div>
<svg class="a" style="left:1878px;top:442px" width="31" height="31" viewBox="0 0 31 31"><rect x="1.5" y="1.5" width="28" height="28" rx="3" fill="none" stroke="#fff" stroke-width="2"/><path d="M14 17l-8 8M6 18V25h7M17 14l8-8M18 6H25v7" fill="none" stroke="#fff" stroke-width="2"/></svg>
<div class="a" style="left:186px;top:792px;width:1704px;height:74px;background:#fff;box-shadow:0 -2px 6px rgba(0,0,0,.09)"></div>
<div class="a" style="left:1364px;top:803px;width:122px;height:54px;border:1px solid #5b6cf9;border-radius:4px;color:#5062fc;font-size:24px;line-height:52px;text-align:center">分摊</div>
<div class="a" style="left:1504px;top:803px;width:122px;height:54px;border:1px solid #c8c8c8;border-radius:4px;color:#333;font-size:24px;line-height:52px;text-align:center">放弃</div>
<div class="a" style="left:1645px;top:801px;width:212px;height:54px;background:#5062fc;border-radius:4px;color:#fff;font-size:24.5px;line-height:54px;white-space:nowrap;padding-left:34px">保存&amp;新增</div>
<svg class="a" style="left:1804px;top:823px" width="16" height="10" viewBox="0 0 16 10"><path d="M1 9l7-7 7 7" fill="none" stroke="#fff" stroke-width="2"/></svg>
</body></html>
